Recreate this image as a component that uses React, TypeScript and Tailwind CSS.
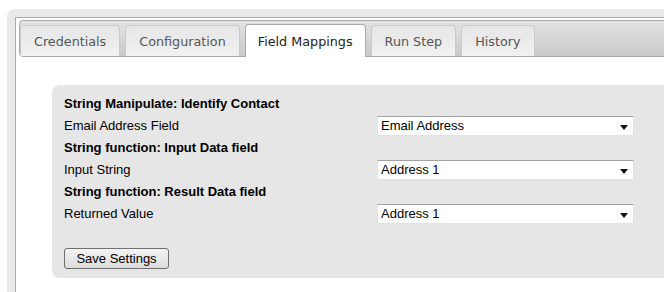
import React from 'react'

const tabs = ['Credentials', 'Configuration', 'Field Mappings', 'Run Step', 'History']
const active = 'Field Mappings'

const rows: { type: 'heading' | 'field'; label: string; value?: string }[] = [
  { type: 'heading', label: 'String Manipulate: Identify Contact' },
  { type: 'field', label: 'Email Address Field', value: 'Email Address' },
  { type: 'heading', label: 'String function: Input Data field' },
  { type: 'field', label: 'Input String', value: 'Address 1' },
  { type: 'heading', label: 'String function: Result Data field' },
  { type: 'field', label: 'Returned Value', value: 'Address 1' },
]

function FakeSelect({ value }: { value: string }) {
  return (
    <div className="flex h-[20px] w-[257px] items-center justify-between border border-[#e2e2e2] border-t-[#a3a3a3] bg-white pl-[3px] pr-[5px] text-[13px] text-black">
      <span>{value}</span>
      <svg width="8" height="5" viewBox="0 0 8 5" className="mt-[2px]">
        <path d="M0 0 H8 L4 5 Z" fill="#111" />
      </svg>
    </div>
  )
}

export default function App() {
  return (
    <div className="h-[292px] w-[664px] overflow-hidden bg-white">
      <div className="ml-[7px] mt-[9px] w-[760px] rounded-[8px] bg-[#e9e9e9] p-2">
        <div className="h-[300px] border border-[#a9a9a9] bg-white pl-[3px] pt-[2px]">
          {/* tab bar */}
          <div
            className="flex h-[37px] items-end gap-[5px] rounded-[4px] border border-[#aaaaaa] bg-linear-to-b from-[#e3e3e3] to-[#c9c9c9]"
            style={{ fontFamily: '"DejaVu Sans", Verdana, sans-serif' }}
          >
            {tabs.map(t =>
              t === active ? (
                <div
                  key={t}
                  className="-mb-px flex h-[33px] items-center rounded-t-[4px] border border-b-0 border-[#aaaaaa] bg-white px-[12px] pt-[1px] text-[12.75px] text-[#222]"
                >
                  {t}
                </div>
              ) : (
                <div
                  key={t}
                  className="flex h-[31px] items-center rounded-t-[4px] border border-b-0 border-[#cacaca] bg-linear-to-b from-[#e6e6e6] to-[#f1f1f1] px-[13px] pt-[1px] text-[12.75px] text-[#555]"
                >
                  {t}
                </div>
              )
            )}
          </div>

          {/* content */}
          <div className="pl-[33px] pt-[28px]" style={{ fontFamily: '"Liberation Sans", Arial, sans-serif' }}>
            <div className="rounded-[8px] bg-[#e6e6e6] pb-[9px] pl-3 pt-2 text-[13px] text-black">
              {rows.map(r =>
                r.type === 'heading' ? (
                  <div key={r.label} className="flex h-[22px] items-center font-bold">
                    {r.label}
                  </div>
                ) : (
                  <div key={r.label} className="flex h-[22px] items-center">
                    <div className="w-[313px]">{r.label}</div>
                    <FakeSelect value={r.value!} />
                  </div>
                )
              )}
              <button className="mt-[23px] flex h-[21px] w-[105px] items-center justify-center rounded-[3px] border border-[#707070] bg-linear-to-b from-[#f4f4f4] to-[#dcdcdc] text-[13px] text-black">
                Save Settings
              </button>
            </div>
          </div>
        </div>
      </div>
    </div>
  )
}
